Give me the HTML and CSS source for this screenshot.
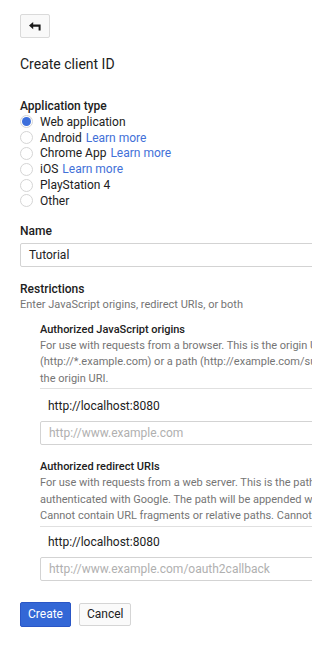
FILE: index.html
```html
<!DOCTYPE html>
<html>
<head>
<meta charset="utf-8">
<link rel="stylesheet" href="styles.css">
</head>
<body>
<div class="page">
  <button class="back" aria-label="Back">
    <svg width="12" height="9" viewBox="0 0 12 9"><path d="M0 3.6 L4.2 0 V2.4 H11.6 V8.6 H9.6 V4.8 H4.2 V7.2 Z" fill="#1a1a1a"/></svg>
  </button>

  <h1 class="title">Create client ID</h1>

  <div class="label app-label">Application type</div>
  <div class="radios">
    <label class="radio"><span class="dot checked"></span>Web application</label>
    <label class="radio"><span class="dot"></span>Android <a class="link">Learn more</a></label>
    <label class="radio"><span class="dot"></span>Chrome App <a class="link">Learn more</a></label>
    <label class="radio"><span class="dot"></span>iOS <a class="link">Learn more</a></label>
    <label class="radio"><span class="dot"></span>PlayStation 4</label>
    <label class="radio"><span class="dot"></span>Other</label>
  </div>

  <div class="label name-label">Name</div>
  <div class="input name-input">Tutorial</div>

  <div class="label restr-label">Restrictions</div>
  <div class="hint">Enter JavaScript origins, redirect URIs, or both</div>

  <div class="section">
    <div class="sub-label">Authorized JavaScript origins</div>
    <div class="desc">For use with requests from a browser. This is the origin URI of the client application. It can't contain a wildcard<br>(http://*.example.com) or a path (http://example.com/subdir). If you're using a nonstandard port, you must include it in<br>the origin URI.</div>
    <div class="entry">http://localhost:8080</div>
    <div class="input sub-input placeholder">http://www.example.com</div>
  </div>

  <div class="section">
    <div class="sub-label">Authorized redirect URIs</div>
    <div class="desc">For use with requests from a web server. This is the path in your application that users are redirected to after they have<br>authenticated with Google. The path will be appended with the authorization code for access. Must have a protocol.<br>Cannot contain URL fragments or relative paths. Cannot be a public IP address.</div>
    <div class="entry">http://localhost:8080</div>
    <div class="input sub-input placeholder">http://www.example.com/oauth2callback</div>
  </div>

  <div class="actions">
    <button class="btn primary">Create</button>
    <button class="btn secondary">Cancel</button>
  </div>
</div>
</body>
</html>
```
FILE: styles.css
```css
html, body {
  margin: 0;
  padding: 0;
  background: #fff;
  overflow: hidden;
}
body {
  font-family: Roboto, "Liberation Sans", Arial, sans-serif;
  color: #222;
  font-size: 13px;
}
.page {
  width: 760px;
  padding: 14px 0 0 20px;
}
.back {
  display: flex;
  align-items: center;
  justify-content: center;
  width: 30px;
  height: 24px;
  padding: 0;
  margin: 0;
  border: 1px solid #dadada;
  border-radius: 2px;
  background: #f9f9f9;
}
.title {
  font-size: 14px;
  font-weight: 400;
  margin: 16px 0 0;
  line-height: 20px;
  color: #212121;
}
.label {
  font-size: 12px;
  font-weight: 500;
  line-height: 16px;
  color: #212121;
}
.app-label { margin-top: 24px; }
.radios {
  display: flex;
  flex-direction: column;
}
.radio {
  display: flex;
  align-items: center;
  height: 15.8px;
  font-size: 12px;
  color: #212121;
}
.dot {
  box-sizing: border-box;
  width: 13px;
  height: 13px;
  border-radius: 50%;
  border: 1px solid #d5d5d5;
  background: #fff;
  margin-right: 7px;
  display: flex;
  align-items: center;
  justify-content: center;
}
.dot.checked::after {
  content: "";
  width: 9px;
  height: 9px;
  border-radius: 50%;
  background: #3d6fdc;
}
.link {
  color: #4270d8;
  margin-left: 4px;
}
.name-label { margin-top: 14px; }
.input {
  box-sizing: border-box;
  height: 24px;
  border: 1px solid #d3d3d3;
  border-radius: 2px;
  display: flex;
  align-items: center;
  padding-left: 8px;
  font-size: 12px;
}
.name-input {
  margin-top: 4px;
  width: 700px;
}
.restr-label { margin-top: 14px; }
.hint {
  font-size: 11px;
  color: #757575;
  line-height: 16px;
}
.section {
  margin-left: 20px;
  margin-top: 9px;
}
.section + .section { margin-top: 14px; }
.sub-label {
  font-size: 11px;
  font-weight: 500;
  color: #212121;
  line-height: 16px;
}
.desc {
  font-size: 11px;
  color: #757575;
  line-height: 16.5px;
  white-space: nowrap;
  padding-bottom: 1px;
  border-bottom: 1px solid #e0e0e0;
}
.entry {
  font-size: 12px;
  color: #212121;
  padding-left: 8px;
  line-height: 16px;
  margin-top: 9px;
}
.section + .section .entry { margin-top: 7px; }
.sub-input {
  margin-top: 7px;
  width: 680px;
}
.placeholder { color: #b0b0b0; }
.actions {
  display: flex;
  align-items: center;
  gap: 8px;
  margin-top: 21px;
}
.btn {
  font-family: Roboto, "Liberation Sans", Arial, sans-serif;
  font-size: 12px;
  border-radius: 2px;
  margin: 0;
  cursor: pointer;
}
.primary {
  height: 25px;
  padding: 0 7px;
  background: #3367d6;
  border: 1px solid #2a56c6;
  color: #fff;
}
.secondary {
  height: 23px;
  padding: 0 7px;
  background: #fafafa;
  border: 1px solid #d5d5d5;
  color: #212121;
}
```
